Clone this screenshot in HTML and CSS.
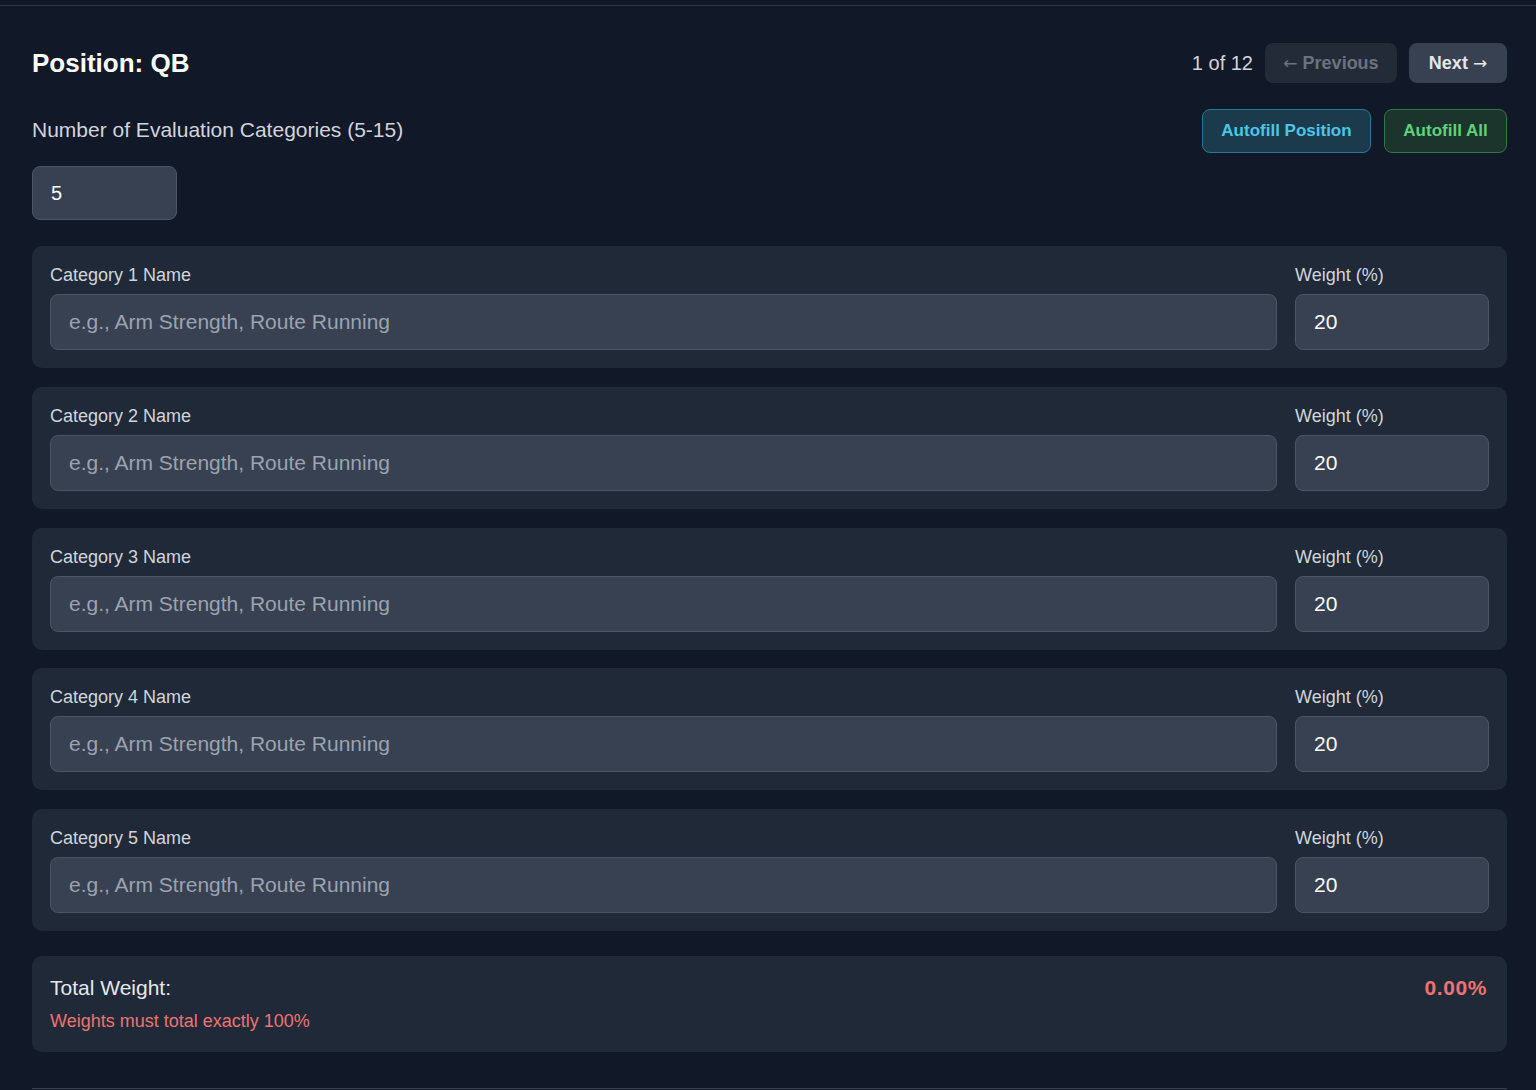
FILE: index.html
```html
<!DOCTYPE html>
<html lang="en">
<head>
    <meta charset="UTF-8">
    <meta name="viewport" content="width=device-width, initial-scale=1.0">
    <title>Position Categories</title>
    <link rel="stylesheet" href="styles.css">
</head>
<body>
    <div class="panel">
        <!-- Header -->
        <div class="header">
            <h1 class="title">Position: QB</h1>
            <div class="pager">
                <span class="pager-count">1 of 12</span>
                <button class="btn btn-prev" disabled><span class="arrow">&larr;</span> Previous</button>
                <button class="btn btn-next">Next <span class="arrow">&rarr;</span></button>
            </div>
        </div>

        <!-- Count + autofill -->
        <div class="setup">
            <div class="count-block">
                <label class="count-label" for="count">Number of Evaluation Categories (5-15)</label>
                <input id="count" class="count-input" type="text" value="5">
            </div>
            <div class="autofill">
                <button class="btn btn-autofill-pos">Autofill Position</button>
                <button class="btn btn-autofill-all">Autofill All</button>
            </div>
        </div>

        <!-- Categories -->
        <div class="categories">
            <div class="category">
                <div class="field">
                    <label class="field-label">Category 1 Name</label>
                    <input class="field-input" type="text" placeholder="e.g., Arm Strength, Route Running">
                </div>
                <div class="field">
                    <label class="field-label">Weight (%)</label>
                    <input class="field-input weight" type="text" value="20">
                </div>
            </div>
            <div class="category">
                <div class="field">
                    <label class="field-label">Category 2 Name</label>
                    <input class="field-input" type="text" placeholder="e.g., Arm Strength, Route Running">
                </div>
                <div class="field">
                    <label class="field-label">Weight (%)</label>
                    <input class="field-input weight" type="text" value="20">
                </div>
            </div>
            <div class="category">
                <div class="field">
                    <label class="field-label">Category 3 Name</label>
                    <input class="field-input" type="text" placeholder="e.g., Arm Strength, Route Running">
                </div>
                <div class="field">
                    <label class="field-label">Weight (%)</label>
                    <input class="field-input weight" type="text" value="20">
                </div>
            </div>
            <div class="category">
                <div class="field">
                    <label class="field-label">Category 4 Name</label>
                    <input class="field-input" type="text" placeholder="e.g., Arm Strength, Route Running">
                </div>
                <div class="field">
                    <label class="field-label">Weight (%)</label>
                    <input class="field-input weight" type="text" value="20">
                </div>
            </div>
            <div class="category">
                <div class="field">
                    <label class="field-label">Category 5 Name</label>
                    <input class="field-input" type="text" placeholder="e.g., Arm Strength, Route Running">
                </div>
                <div class="field">
                    <label class="field-label">Weight (%)</label>
                    <input class="field-input weight" type="text" value="20">
                </div>
            </div>
        </div>

        <!-- Total -->
        <div class="total">
            <div class="total-row">
                <span class="total-label">Total Weight:</span>
                <span class="total-value">0.00%</span>
            </div>
            <p class="total-error">Weights must total exactly 100%</p>
        </div>

        <div class="footer-line"></div>
    </div>
</body>
</html>
```

FILE: styles.css
```css
/* Base */
body {
    margin: 0;
    padding-top: 5px;
    background-color: #111827;
    color: #f3f4f6;
    font-family: 'Liberation Sans', Arial, sans-serif;
}

.panel {
    border-top: 1px solid #2d3542;
    padding: 0 29px 0 32px;
}

/* Header */
.header {
    display: flex;
    justify-content: space-between;
    align-items: center;
    margin-top: 37px;
    height: 40px;
}

.title {
    margin: 0;
    font-size: 26px;
    font-weight: bold;
    color: #ffffff;
}

.pager {
    display: flex;
    align-items: center;
    gap: 12px;
}

.pager-count {
    font-size: 20px;
    color: #d1d5db;
}

.btn {
    font-family: inherit;
    font-weight: bold;
    font-size: 18px;
    border-radius: 8px;
    border: 1px solid transparent;
    cursor: pointer;
    padding: 0;
}

.arrow {
    font-family: 'DejaVu Sans', sans-serif;
    font-weight: normal;
    font-size: 17px;
}

.btn-prev {
    width: 132px;
    height: 40px;
    background-color: #232b38;
    color: #6b7280;
    cursor: default;
}

.btn-next {
    width: 98px;
    height: 40px;
    background-color: #374151;
    color: #e5e7eb;
}

/* Count + autofill */
.setup {
    display: flex;
    justify-content: space-between;
    align-items: flex-start;
    margin-top: 26px;
}

.count-label {
    display: block;
    margin-top: 7px;
    line-height: 28px;
    font-size: 21px;
    color: #d1d5db;
}

.count-input {
    display: block;
    box-sizing: border-box;
    margin-top: 22px;
    width: 145px;
    height: 54px;
    padding: 0 18px;
    font-family: inherit;
    font-size: 20px;
    color: #ffffff;
    background-color: #374151;
    border: 1px solid #4b5563;
    border-radius: 8px;
}

.autofill {
    display: flex;
    gap: 13px;
}

.btn-autofill-pos {
    width: 169px;
    height: 44px;
    font-size: 17px;
    background-color: #1b3a4b;
    border-color: #237b93;
    color: #4cc6e4;
}

.btn-autofill-all {
    width: 123px;
    height: 44px;
    font-size: 17px;
    background-color: #1b352c;
    border-color: #2b7a44;
    color: #5fd27a;
}

/* Categories */
.categories {
    display: flex;
    flex-direction: column;
    gap: 18.75px;
    margin-top: 26px;
}

.category {
    display: grid;
    grid-template-columns: 1fr 194px;
    gap: 18px;
    padding: 18px;
    background-color: #1f2937;
    border-radius: 10px;
}

.field-label {
    display: block;
    line-height: 22px;
    font-size: 18px;
    color: #d1d5db;
}

.field-input {
    display: block;
    box-sizing: border-box;
    width: 100%;
    height: 56px;
    margin-top: 8px;
    padding: 0 18px;
    font-family: inherit;
    font-size: 21px;
    color: #ffffff;
    background-color: #374151;
    border: 1px solid #4b5563;
    border-radius: 8px;
}

.field-input::placeholder {
    color: #9ca3af;
}

/* Total */
.total {
    margin-top: 25px;
    padding: 18px 20px 19px 18px;
    background-color: #1f2937;
    border-radius: 10px;
}

.total-row {
    display: flex;
    justify-content: space-between;
    align-items: center;
    line-height: 28px;
}

.total-label {
    font-size: 21px;
    color: #e5e7eb;
}

.total-value {
    font-size: 21px;
    font-weight: bold;
    letter-spacing: 0.6px;
    color: #f07272;
}

.total-error {
    margin: 7px 0 0;
    line-height: 24px;
    font-size: 18px;
    color: #f07272;
}

.footer-line {
    margin-top: 36px;
    border-top: 1px solid #374151;
}
```
